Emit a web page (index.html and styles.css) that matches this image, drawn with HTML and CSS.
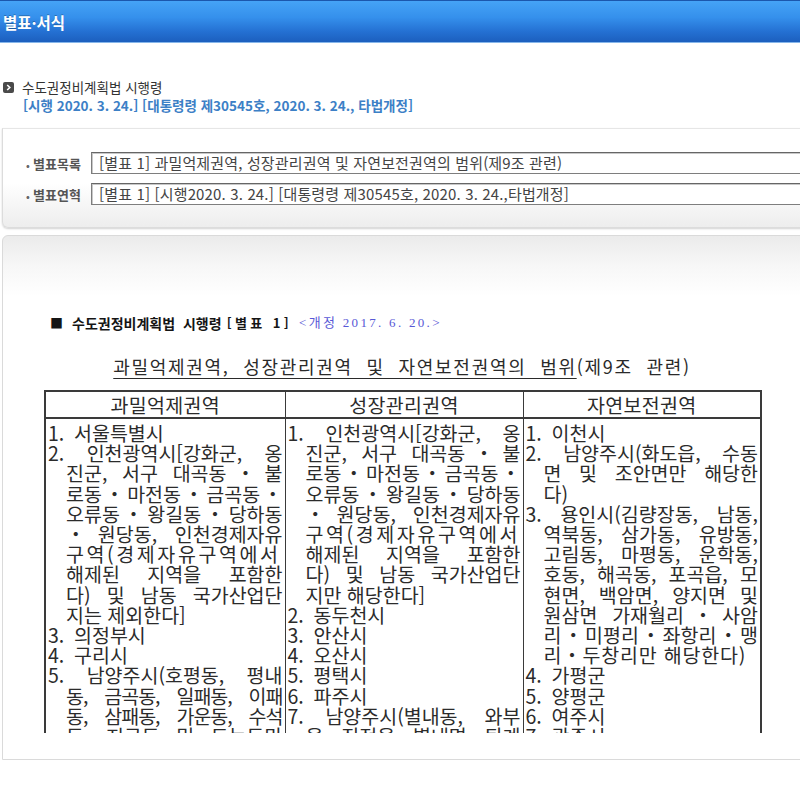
FILE: index.html
```html
<!DOCTYPE html>
<html lang="ko">
<head>
<meta charset="utf-8">
<title>별표·서식</title>
<link rel="stylesheet" href="styles.css">
</head>
<body>
<div class="topbar"><span class="topbar-title">별표·서식</span></div>

<div class="law-head">
  <div class="law-name">
    <svg class="law-ico" width="11" height="11" viewBox="0 0 11 11"><rect x="0" y="0" width="11" height="11" rx="2" fill="#4a4a4a"/><polyline points="4.2,3 6.8,5.5 4.2,8" fill="none" stroke="#fff" stroke-width="1.6"/></svg>
    <span>수도권정비계획법 시행령</span>
  </div>
  <div class="law-meta">[시행 2020. 3. 24.] [대통령령 제30545호, 2020. 3. 24., 타법개정]</div>
</div>

<div class="sel-panel">
  <div class="sel-row">
    <span class="sel-label"><span class="dot">•</span>별표목록</span>
    <div class="sel-box">[별표 1] 과밀억제권역, 성장관리권역 및 자연보전권역의 범위(제9조 관련)</div>
  </div>
  <div class="sel-row">
    <span class="sel-label"><span class="dot">•</span>별표연혁</span>
    <div class="sel-box">[별표 1] [시행2020. 3. 24.] [대통령령 제30545호, 2020. 3. 24.,타법개정]</div>
  </div>
</div>

<div class="doc-panel">
  <div class="doc-head"><span class="sq">■</span><span class="dh-name">수도권정비계획법 시행령</span><span class="dh-tag">[별표 1]</span><span class="dh-rev">&lt;개정 2017. 6. 20.&gt;</span></div>
  <div class="doc-title"><span class="ul">과밀억제권역, 성장관리권역 및 자연보전권역의 범위</span>(제9조 관련)</div>
  <div class="tbl-wrap">
    <table class="zt">
      <colgroup><col class="c1"><col class="c2"><col class="c3"></colgroup>
      <thead><tr><th>과밀억제권역</th><th>성장관리권역</th><th>자연보전권역</th></tr></thead>
      <tbody>
        <tr>
          <td>
            <div class="l"><span class="n">1.</span>서울특별시</div>
            <div class="j">2. 인천광역시[강화군, 옹</div>
            <div class="j i">진군, 서구 대곡동・불</div>
            <div class="j i">로동・마전동・금곡동・</div>
            <div class="j i">오류동・왕길동・당하동</div>
            <div class="j i">・원당동, 인천경제자유</div>
            <div class="l i sp">구역(경제자유구역에서</div>
            <div class="j i">해제된 지역을 포함한</div>
            <div class="j i">다) 및 남동 국가산업단</div>
            <div class="l i">지는 제외한다]</div>
            <div class="l"><span class="n">3.</span>의정부시</div>
            <div class="l"><span class="n">4.</span>구리시</div>
            <div class="j">5. 남양주시(호평동, 평내</div>
            <div class="j i t">동, 금곡동, 일패동, 이패</div>
            <div class="j i t">동, 삼패동, 가운동, 수석</div>
            <div class="j i">동, 지금동 및 도농동만</div>
          </td>
          <td>
            <div class="j">1. 인천광역시[강화군, 옹</div>
            <div class="j i">진군, 서구 대곡동・불</div>
            <div class="j i">로동・마전동・금곡동・</div>
            <div class="j i">오류동・왕길동・당하동</div>
            <div class="j i">・원당동, 인천경제자유</div>
            <div class="l i sp">구역(경제자유구역에서</div>
            <div class="j i">해제된 지역을 포함한</div>
            <div class="j i">다) 및 남동 국가산업단</div>
            <div class="l i">지만 해당한다]</div>
            <div class="l"><span class="n">2.</span>동두천시</div>
            <div class="l"><span class="n">3.</span>안산시</div>
            <div class="l"><span class="n">4.</span>오산시</div>
            <div class="l"><span class="n">5.</span>평택시</div>
            <div class="l"><span class="n">6.</span>파주시</div>
            <div class="j">7. 남양주시(별내동, 와부</div>
            <div class="j i">읍, 진전읍, 별내면, 퇴계</div>
          </td>
          <td>
            <div class="l"><span class="n">1.</span>이천시</div>
            <div class="j">2. 남양주시(화도읍, 수동</div>
            <div class="j i">면 및 조안면만 해당한</div>
            <div class="l i">다)</div>
            <div class="j">3. 용인시(김량장동, 남동,</div>
            <div class="j i">역북동, 삼가동, 유방동,</div>
            <div class="j i">고림동, 마평동, 운학동,</div>
            <div class="j i">호동, 해곡동, 포곡읍, 모</div>
            <div class="j i">현면, 백암면, 양지면 및</div>
            <div class="j i">원삼면 가재월리・사암</div>
            <div class="j i">리・미평리・좌항리・맹</div>
            <div class="l i wd">리・두창리만 해당한다)</div>
            <div class="l"><span class="n">4.</span>가평군</div>
            <div class="l"><span class="n">5.</span>양평군</div>
            <div class="l"><span class="n">6.</span>여주시</div>
            <div class="l"><span class="n">7.</span>광주시</div>
          </td>
        </tr>
      </tbody>
    </table>
  </div>
</div>
</body>
</html>
```

FILE: styles.css
```css
html, body {
  margin: 0;
  padding: 0;
}
body {
  width: 800px;
  height: 790px;
  overflow: hidden;
  background: #fff;
  font-family: "Noto Sans CJK KR", "Noto Sans", sans-serif;
  color: #333;
}

/* top bar */
.topbar {
  height: 41px;
  border-top: 1px solid #1b57ad;
  border-bottom: 1px solid #86b6ea;
  background: linear-gradient(#45a3f6 0%, #3590ec 40%, #2470d2 75%, #1c5fbe 100%);
  display: flex;
  align-items: center;
  padding-left: 3px;
}
.topbar-title {
  color: #fff;
  font-weight: 700;
  font-size: 15.5px;
  text-shadow: 0 -1px 0 rgba(0, 0, 0, 0.25);
}

/* law heading */
.law-head {
  padding: 35px 0 0 3px;
  margin-bottom: 14px;
}
.law-name {
  display: flex;
  align-items: center;
  gap: 8px;
  font-size: 13.5px;
  line-height: 18px;
  color: #333;
}
.law-ico {
  flex: none;
}
.law-meta {
  padding-left: 20px;
  font-size: 13.5px;
  line-height: 18px;
  font-weight: 700;
  color: #3c80c6;
}

/* selector panel */
.sel-panel {
  margin: 0 -30px 0 2px;
  border: 1px solid #dcdcdc;
  border-top-color: #e6e6e6;
  border-radius: 0 0 6px 6px;
  background: linear-gradient(#ffffff 55%, #ededed 100%);
  box-shadow: 0 1px 2px rgba(0, 0, 0, 0.18);
  padding: 23px 0 22px 23px;
  display: flex;
  flex-direction: column;
  gap: 9px;
}
.sel-row {
  display: flex;
  align-items: center;
}
.sel-label {
  width: 65px;
  flex: none;
  font-size: 13px;
  font-weight: 700;
  color: #555;
  white-space: nowrap;
}
.dot {
  display: inline-block;
  width: 7px;
  font-size: 10px;
  color: #666;
}
.sel-box {
  flex: 1;
  height: 20px;
  line-height: 20px;
  border: 1px solid #7e7e7e;
  border-top-color: #666;
  box-shadow: inset 1px 1px 0 #c8c8c8;
  background: #fff;
  padding-left: 7px;
  font-size: 15px;
  letter-spacing: 0.15px;
  color: #444;
  white-space: nowrap;
  overflow: hidden;
}

/* document panel */
.doc-panel {
  margin: 7px -30px 0 2px;
  border: 1px solid #dadada;
  border-radius: 6px 6px 0 0;
  background: linear-gradient(#ebebeb 0px, #f7f7f7 30px, #ffffff 60px);
  padding: 78px 0 26px 41px;
}
.doc-head {
  margin-left: 6px;
  height: 18px;
  line-height: 18px;
  font-size: 13px;
  font-weight: 700;
  color: #151515;
  white-space: nowrap;
  display: flex;
  align-items: center;
}
.sq {
  font-size: 13px;
  margin-right: 9px;
}
.dh-name {
  font-size: 14px;
  word-spacing: 4px;
  margin-right: 5px;
}
.dh-tag {
  letter-spacing: 3.4px;
  margin-right: 7px;
}
.dh-rev {
  font-family: "Liberation Serif", "Noto Sans CJK KR", serif;
  font-weight: 400;
  color: #5858d6;
  letter-spacing: 2.3px;
}
.doc-title {
  width: 716px;
  margin-top: 22px;
  height: 24px;
  line-height: 24px;
  text-align: center;
  font-size: 18px;
  color: #2a2a2a;
  letter-spacing: 1.7px;
  word-spacing: 7px;
  white-space: nowrap;
}
.ul {
  text-decoration: underline;
  text-decoration-thickness: 1px;
  text-underline-offset: 4px;
}
.tbl-wrap {
  margin-top: 12px;
  width: 720px;
  height: 343px;
  overflow: hidden;
}
.zt {
  width: 716px;
  table-layout: fixed;
  border-collapse: collapse;
  border: 2px solid #3a3a3a;
  color: #2b2b2b;
  font-size: 19.5px;
}
.c1 { width: 240px; }
.c2 { width: 238px; }
.c3 { width: 238px; }
.zt th {
  height: 25px;
  line-height: 25px;
  padding: 0;
  font-weight: 400;
  text-align: center;
  letter-spacing: 0.3px;
  border: 1px solid #3a3a3a;
  border-bottom: 2px solid #3a3a3a;
}
.zt td {
  vertical-align: top;
  padding: 4px 2px 0 2px;
  border: 1px solid #3a3a3a;
  line-height: 20.2px;
}
.l {
  white-space: nowrap;
}
.j {
  text-align: justify;
  text-align-last: justify;
}
.i {
  padding-left: 18px;
}
.sp {
  letter-spacing: 2.6px;
}
.wd {
  letter-spacing: 0.8px;
}
.t {
  letter-spacing: -1px;
}
.n {
  display: inline-block;
  width: 26px;
}
```
